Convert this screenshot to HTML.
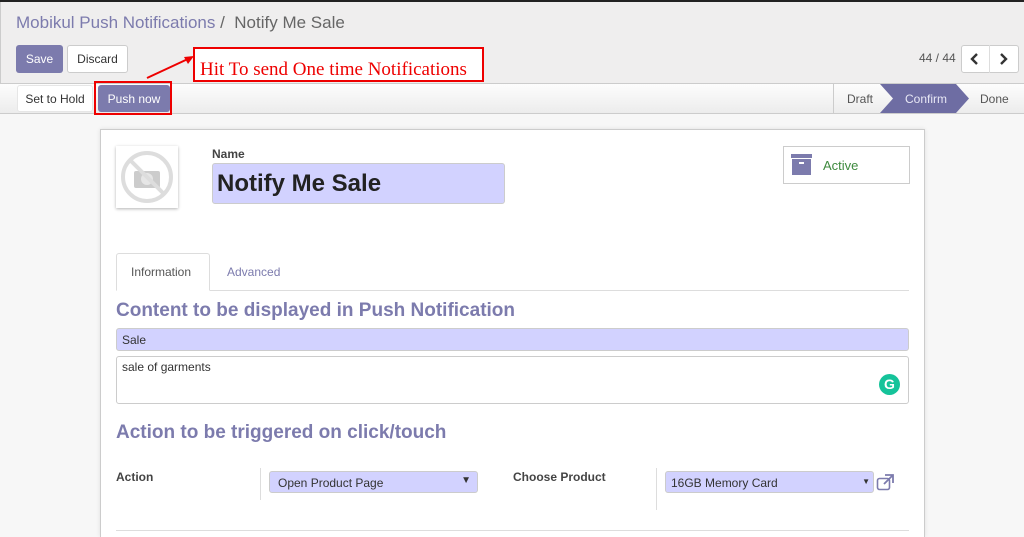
<!DOCTYPE html>
<html style="overflow:hidden"><head><meta charset="utf-8"><style>
*{box-sizing:border-box;margin:0;padding:0}
body{width:1024px;height:537px;overflow:hidden;font-family:"Liberation Sans",sans-serif;background:#f7f7f7;position:relative;font-size:12px;color:#333}
.a{position:absolute}
.btn{position:absolute;border-radius:3px;font-size:12px;display:flex;align-items:center;justify-content:center}
.pri{background:#7c7bad;color:#fff}
.def{background:#fff;border:1px solid #ccc;color:#333}
</style></head><body>
<div class="a" style="left:0;top:0;width:1024px;height:2px;background:#222"></div>
<div class="a" style="left:0;top:2px;width:1024px;height:81px;background:#efeeee;border-left:1px solid #ccc"></div>
<div class="a" style="left:16px;top:13px;font-size:17px;color:#7c7bad">Mobikul Push Notifications <span style="color:#666">/&nbsp; Notify Me Sale</span></div>
<div class="btn pri" style="left:16px;top:45px;width:47px;height:28px">Save</div>
<div class="btn def" style="left:67px;top:45px;width:61px;height:28px">Discard</div>
<div class="a" style="left:919px;top:51px;color:#555;font-size:12px">44 / 44</div>
<div class="a" style="left:961px;top:45px;width:58px;height:28px;background:#fff;border:1px solid #ccc;border-radius:3px"></div>
<div class="a" style="left:989px;top:45px;width:1px;height:28px;background:#ddd"></div>
<svg class="a" style="left:969px;top:53px" width="12" height="12"><path d="M8 1 3 6l5 5" fill="none" stroke="#333" stroke-width="2.4"/></svg>
<svg class="a" style="left:997px;top:53px" width="12" height="12"><path d="M4 1l5 5-5 5" fill="none" stroke="#333" stroke-width="2.4"/></svg>
<div class="a" style="left:0;top:83px;width:1024px;height:31px;background:linear-gradient(#fdfdfd,#ececec);border-top:1px solid #ccc;border-bottom:1px solid #ccc"></div>
<div class="btn def" style="left:17px;top:85px;width:76px;height:27px;border-color:#e6e6e6">Set to Hold</div>
<div class="btn pri" style="left:98px;top:85px;width:72px;height:27px">Push now</div>
<div class="a" style="left:94px;top:81px;width:78px;height:34px;border:2px solid #e00"></div>
<div class="a" style="left:833px;top:84px;width:1px;height:29px;background:#ccc"></div>
<div class="a" style="left:847px;top:92px;color:#555">Draft</div>
<svg class="a" style="left:880px;top:84px" width="90" height="29"><polygon points="0,0 76,0 89,14.5 76,29 0,29 13,14.5" fill="#6e6da3"/></svg>
<div class="a" style="left:905px;top:92px;color:#e8e8f5">Confirm</div>
<div class="a" style="left:980px;top:92px;color:#555">Done</div>
<div class="a" style="left:193px;top:47px;width:291px;height:35px;border:2px solid #e00;background:#fff"></div>
<div class="a" style="left:200px;top:59px;font-family:'Liberation Serif',serif;font-size:19px;color:#e00">Hit To send One time Notifications</div>
<svg class="a" style="left:140px;top:50px" width="60" height="35"><line x1="7" y1="28" x2="50" y2="8" stroke="#e00" stroke-width="2"/><polygon points="54,6 44,7 48,14" fill="#e00"/></svg>
<div class="a" style="left:100px;top:129px;width:825px;height:408px;background:#fff;border:1px solid #ccc;border-bottom:none;box-shadow:0 0 4px rgba(0,0,0,.1)"></div>
<div class="a" style="left:116px;top:146px;width:62px;height:62px;background:#fff;box-shadow:0 1px 3px rgba(0,0,0,.3)"></div>
<svg class="a" style="left:118px;top:148px" width="58" height="58"><circle cx="29" cy="29" r="24" fill="none" stroke="#ddd" stroke-width="4"/><rect x="16" y="23" width="26" height="17" rx="2" fill="#ccc"/><circle cx="29" cy="31" r="6" fill="#e6e6e6"/><line x1="12" y1="12" x2="46" y2="46" stroke="#ddd" stroke-width="4"/></svg>
<div class="a" style="left:212px;top:147px;font-weight:bold;font-size:12px;color:#444">Name</div>
<div class="a" style="left:212px;top:163px;width:293px;height:41px;background:#d2d2ff;border:1px solid #ccc;border-radius:3px"></div>
<div class="a" style="left:217px;top:170px;font-weight:bold;font-size:24px;color:#222">Notify Me Sale</div>
<div class="a" style="left:783px;top:146px;width:127px;height:38px;border:1px solid #ccc;background:#fff"></div>
<svg class="a" style="left:791px;top:154px" width="22" height="22"><rect x="0" y="0" width="21" height="4" fill="#7c7bad"/><rect x="1" y="5" width="19" height="16" fill="#7c7bad"/><rect x="8" y="8" width="5" height="2" fill="#fff"/></svg>
<div class="a" style="left:823px;top:158px;color:#3e8a3e;font-size:13px">Active</div>
<div class="a" style="left:116px;top:290px;width:793px;height:1px;background:#ddd"></div>
<div class="a" style="left:116px;top:253px;width:94px;height:38px;background:#fff;border:1px solid #ddd;border-bottom-color:#fff;border-radius:3px 3px 0 0"></div>
<div class="a" style="left:131px;top:265px;color:#555">Information</div>
<div class="a" style="left:227px;top:265px;color:#7c7bad">Advanced</div>
<div class="a" style="left:116px;top:300px;font-size:19px;font-weight:bold;color:#7c7bad">Content to be displayed in Push Notification</div>
<div class="a" style="left:116px;top:328px;width:793px;height:23px;background:#d2d2ff;border:1px solid #ccc;border-radius:3px;padding:4px 5px">Sale</div>
<div class="a" style="left:116px;top:356px;width:793px;height:48px;background:#fff;border:1px solid #ccc;border-radius:3px;padding:3px 5px">sale of garments</div>
<div class="a" style="left:879px;top:374px;width:21px;height:21px;border-radius:50%;background:#15c39a;color:#fff;font-weight:bold;font-size:14px;text-align:center;line-height:21px">G</div>
<div class="a" style="left:116px;top:422px;font-size:19px;font-weight:bold;color:#7c7bad">Action to be triggered on click/touch</div>
<div class="a" style="left:116px;top:470px;font-weight:bold;color:#444">Action</div>
<div class="a" style="left:260px;top:468px;width:1px;height:32px;background:#ddd"></div>
<div class="a" style="left:269px;top:471px;width:209px;height:22px;background:#d2d2ff;border:1px solid #ccc;border-radius:3px;padding:4px 8px">Open Product Page<span style="position:absolute;right:6px;top:3px;font-size:10px">&#9660;</span></div>
<div class="a" style="left:513px;top:470px;font-weight:bold;color:#444">Choose Product</div>
<div class="a" style="left:656px;top:468px;width:1px;height:42px;background:#ddd"></div>
<div class="a" style="left:665px;top:471px;width:209px;height:22px;background:#d2d2ff;border:1px solid #ccc;border-radius:3px;padding:4px 5px">16GB Memory Card<span style="position:absolute;right:3px;top:5px;font-size:8px">&#9660;</span></div>
<svg class="a" style="left:876px;top:473px" width="20" height="18"><rect x="1.5" y="5.5" width="12" height="11" rx="2" fill="none" stroke="#7c7bad" stroke-width="1.6"/><path d="M9 2h8v8M17 2 8 11" fill="none" stroke="#7c7bad" stroke-width="1.8"/></svg>
<div class="a" style="left:116px;top:530px;width:793px;height:1px;background:#ddd"></div>
</body></html>
